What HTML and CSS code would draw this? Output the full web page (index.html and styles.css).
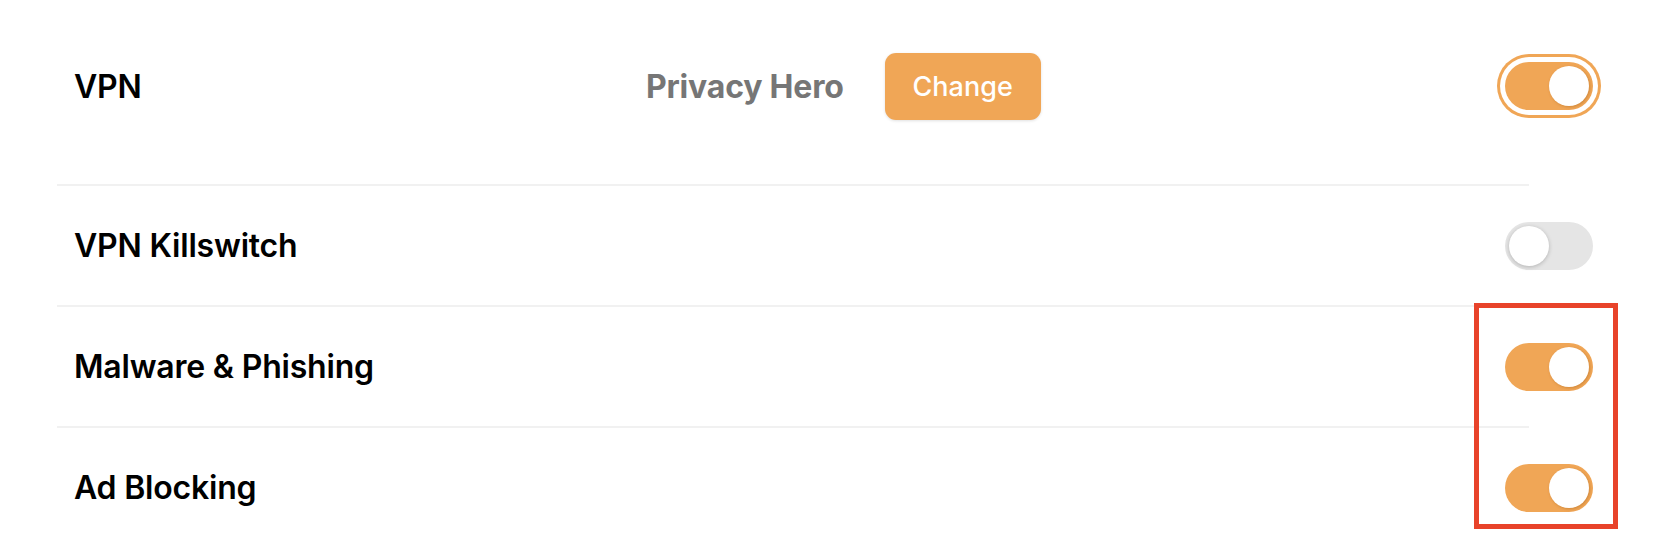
FILE: index.html
```html
<!DOCTYPE html>
<html lang="en">
<head>
<meta charset="utf-8">
<title>Settings</title>
<link rel="stylesheet" href="styles.css">
</head>
<body>
<div class="settings">
  <div class="row row-first">
    <div class="label">VPN</div>
    <div class="provider">
      <span class="provider-name">Privacy Hero</span>
      <button class="btn-change">Change</button>
    </div>
    <div class="toggle on focused"><span class="knob"></span></div>
  </div>
  <div class="divider"></div>
  <div class="row">
    <div class="label">VPN Killswitch</div>
    <div class="toggle"><span class="knob"></span></div>
  </div>
  <div class="divider"></div>
  <div class="row">
    <div class="label">Malware &amp; Phishing</div>
    <div class="toggle on"><span class="knob"></span></div>
  </div>
  <div class="divider"></div>
  <div class="row">
    <div class="label">Ad Blocking</div>
    <div class="toggle on"><span class="knob"></span></div>
  </div>
  <div class="highlight"></div>
</div>
</body>
</html>
```
FILE: styles.css
```css
* { box-sizing: border-box; }
html, body {
  margin: 0;
  padding: 0;
  background: #fff;
}
body {
  font-family: Inter, "Noto Sans", sans-serif;
  overflow: hidden;
}
.settings {
  position: relative;
  width: 1654px;
  height: 544px;
}
.row {
  display: flex;
  align-items: center;
  height: 119px;
  padding-left: 74px;
  padding-right: 61px;
}
.row-first {
  height: 172px;
  margin-bottom: 12px;
}
.label {
  font-size: 32px;
  font-weight: 600;
  color: #000;
  letter-spacing: -0.2px;
}
.row-first .label {
  width: 572px;
  flex: none;
}
.provider {
  display: flex;
  align-items: center;
  gap: 41px;
}
.provider-name {
  font-size: 32px;
  font-weight: 700;
  color: #767676;
  letter-spacing: -0.2px;
}
.btn-change {
  font-family: Inter, "Noto Sans", sans-serif;
  width: 156px;
  height: 67px;
  border: none;
  border-radius: 11px;
  background: #f0a656;
  color: #fff;
  font-size: 27px;
  font-weight: 500;
  box-shadow: 0 1px 3px rgba(0, 0, 0, 0.12);
  padding: 0;
}
.toggle {
  margin-left: auto;
  width: 88px;
  height: 48px;
  border-radius: 24px;
  background: #e5e5e5;
  display: flex;
  align-items: center;
  padding: 4px;
  flex: none;
}
.toggle.on {
  background: #f0a656;
  justify-content: flex-end;
}
.knob {
  width: 40px;
  height: 40px;
  border-radius: 50%;
  background: #fff;
  box-shadow: 0 1px 4px rgba(0, 0, 0, 0.22);
}
.toggle.on .knob {
  box-shadow: 1px 1px 3px rgba(150, 80, 10, 0.35);
}
.toggle.focused {
  box-shadow: 0 0 0 5px #fff, 0 0 0 8px #f0a656;
}
.divider {
  margin-left: 57px;
  width: 1472px;
  height: 2px;
  background: #f1f1f1;
}
.highlight {
  position: absolute;
  left: 1474px;
  top: 303px;
  width: 144px;
  height: 226px;
  border: 5px solid #e8432a;
  pointer-events: none;
}
```
